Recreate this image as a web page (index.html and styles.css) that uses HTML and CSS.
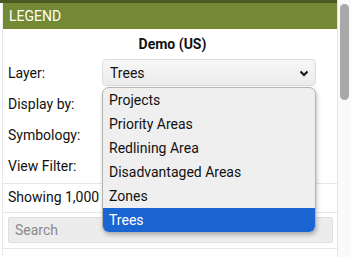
FILE: index.html
```html
<!DOCTYPE html>
<html lang="en">
<head>
    <meta charset="UTF-8">
    <title>Legend</title>
    <link rel="stylesheet" href="styles.css">
</head>
<body>
    <div class="top-line"></div>
    <div class="page">
        <div class="panel">
            <div class="legend-title">LEGEND</div>
            <div class="legend-content">
                <div class="map-name">Demo (US)</div>
                <div class="field-row">
                    <div class="field-label">Layer:</div>
                    <div class="fake-select">
                        <span>Trees</span>
                        <svg class="chevron" width="10" height="7" viewBox="0 0 10 7">
                            <path d="M1.5 1.5 L5 5 L8.5 1.5" fill="none" stroke="#111" stroke-width="2"/>
                        </svg>
                    </div>
                    <ul class="select-list">
                        <li>Projects</li>
                        <li>Priority Areas</li>
                        <li>Redlining Area</li>
                        <li>Disadvantaged Areas</li>
                        <li>Zones</li>
                        <li class="selected">Trees</li>
                    </ul>
                </div>
                <div class="field-row">
                    <div class="field-label">Display by:</div>
                </div>
                <div class="field-row">
                    <div class="field-label">Symbology:</div>
                </div>
                <div class="field-row">
                    <div class="field-label">View Filter:</div>
                </div>
            </div>
            <div class="count-row">Showing 1,000</div>
            <div class="search-row">
                <input type="text" class="search-input" placeholder="Search">
            </div>
        </div>
        <div class="scrollbar">
            <div class="scroll-thumb"></div>
        </div>
    </div>
</body>
</html>
```

FILE: styles.css
```css
body {
    margin: 0;
    font-family: Roboto, "Liberation Sans", sans-serif;
    font-size: 14px;
    color: #111;
    background: #fff;
    overflow: hidden;
}
.top-line {
    height: 3px;
    background: #4c5a24;
}
.page {
    display: flex;
    height: 254px;
}
.panel {
    width: 334px;
    margin-left: 2px;
    border-left: 1px solid #e8e8e8;
}
.legend-title {
    height: 26px;
    line-height: 27px;
    padding-left: 6px;
    background: #738934;
    color: #fff;
    font-size: 14px;
}
.legend-content {
    position: relative;
    padding: 0 0 2px 5px;
    border-bottom: 1px solid #e6e6e6;
}
.map-name {
    height: 28px;
    line-height: 30px;
    text-align: center;
    font-weight: bold;
}
.field-row {
    display: flex;
    align-items: center;
    height: 31px;
}
.field-label {
    width: 94px;
}
.fake-select {
    display: flex;
    align-items: center;
    justify-content: space-between;
    width: 214px;
    height: 27px;
    padding: 0 6px 0 7px;
    box-sizing: border-box;
    border: 1px solid #dcdcdc;
    border-radius: 4px;
    background: linear-gradient(#f7f7f7, #ebebeb);
}
.chevron {
    margin-top: 1px;
}
.select-list {
    position: absolute;
    top: 58px;
    left: 99px;
    width: 212px;
    margin: 0;
    padding: 0;
    list-style: none;
    background: #efefef;
    border: 1px solid #b4b4b4;
    border-radius: 7px;
    overflow: hidden;
    box-shadow: 1px 2px 4px rgba(0, 0, 0, 0.25);
    z-index: 2;
}
.select-list li {
    height: 24px;
    line-height: 24px;
    padding-left: 6px;
}
.select-list li.selected {
    background: #1a65d1;
    color: #fff;
}
.count-row {
    height: 28px;
    line-height: 27px;
    padding-left: 5px;
    border-bottom: 1px solid #e6e6e6;
}
.search-row {
    padding: 4px 4px 5px 5px;
    border-bottom: 1px solid #e6e6e6;
}
.search-input {
    display: block;
    width: 100%;
    height: 26px;
    box-sizing: border-box;
    padding: 0 6px;
    border: 1px solid #dedede;
    border-radius: 2px;
    background: #ececec;
    font-family: Roboto, "Liberation Sans", sans-serif;
    font-size: 14px;
}
.search-input::placeholder {
    color: #8a8a8a;
}
.scrollbar {
    flex: 1;
    margin-top: -3px;
    border-left: 1px solid #e4e4e4;
    background: #fafafa;
    padding: 4px 2px 0 2px;
}
.scroll-thumb {
    height: 96px;
    border-radius: 5px;
    background: #a9a9a9;
}
```
